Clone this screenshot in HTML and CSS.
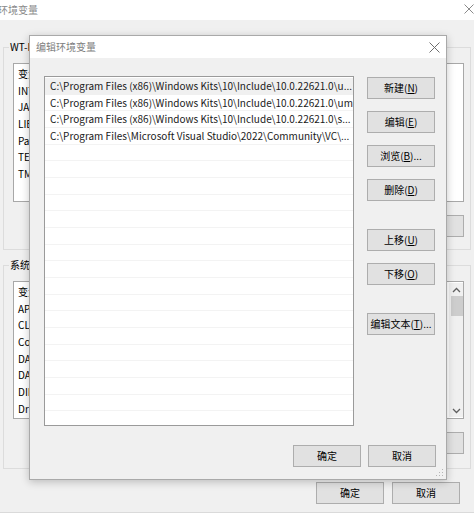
FILE: index.html
```html
<!DOCTYPE html>
<html lang="zh-CN">
<head>
<meta charset="utf-8">
<title>编辑环境变量</title>
<link rel="stylesheet" href="styles.css">
</head>
<body>
<div class="bg-window">
  <div class="bg-title">
    <span class="bg-title-text">环境变量</span>
    <svg class="bg-close" width="10" height="10" viewBox="0 0 10 10"><path d="M0.5 0.5 L9.5 9.5 M9.5 0.5 L0.5 9.5" stroke="#8a8a8a" stroke-width="1" fill="none"/></svg>
  </div>
  <div class="bg-body">
    <fieldset class="group">
      <legend>WT-PC 的用户变量(U)</legend>
      <div class="var-list">
        <div class="var-rows">
          <div class="var-row">变量</div>
          <div class="var-row">INTELLIJ IDEA</div>
          <div class="var-row">JAVA_HOME</div>
          <div class="var-row">LIB</div>
          <div class="var-row">Path</div>
          <div class="var-row">TEMP</div>
          <div class="var-row">TMP</div>
        </div>
      </div>
      <div class="group-buttons">
        <button class="btn">新建(<u>N</u>)...</button>
        <button class="btn">编辑(<u>E</u>)...</button>
        <button class="btn">删除(<u>D</u>)</button>
      </div>
    </fieldset>
    <fieldset class="group group-sys">
      <legend>系统变量(<u>S</u>)</legend>
      <div class="var-list">
        <div class="var-rows">
          <div class="var-row">变量</div>
          <div class="var-row">APPDATA</div>
          <div class="var-row">CLASSPATH</div>
          <div class="var-row">ComSpec</div>
          <div class="var-row">DATA_HOME</div>
          <div class="var-row">DATA_PATH</div>
          <div class="var-row">DIRCMD</div>
          <div class="var-row">DriverData</div>
        </div>
        <div class="scrollbar">
          <svg class="sb-arrow" width="9" height="6" viewBox="0 0 9 6"><path d="M1 5 L4.5 1.5 L8 5" stroke="#606060" stroke-width="1.3" fill="none"/></svg>
          <div class="sb-track"><div class="sb-thumb"></div></div>
          <svg class="sb-arrow" width="9" height="6" viewBox="0 0 9 6"><path d="M1 1 L4.5 4.5 L8 1" stroke="#606060" stroke-width="1.3" fill="none"/></svg>
        </div>
      </div>
      <div class="group-buttons">
        <button class="btn">新建(<u>W</u>)...</button>
        <button class="btn">编辑(<u>I</u>)...</button>
        <button class="btn">删除(<u>L</u>)</button>
      </div>
    </fieldset>
    <div class="bg-footer">
      <button class="btn btn-footer">确定</button>
      <button class="btn btn-footer">取消</button>
    </div>
  </div>
</div>

<div class="dialog">
  <div class="dlg-title">
    <span class="dlg-title-text">编辑环境变量</span>
    <svg class="dlg-close" width="11" height="11" viewBox="0 0 11 11"><path d="M0.5 0.5 L10.5 10.5 M10.5 0.5 L0.5 10.5" stroke="#6e6e6e" stroke-width="1" fill="none"/></svg>
  </div>
  <div class="dlg-body">
    <div class="dlg-main">
      <div class="path-list">
        <div class="path-row selected">C:\Program Files (x86)\Windows Kits\10\Include\10.0.22621.0\u...</div>
        <div class="path-row">C:\Program Files (x86)\Windows Kits\10\Include\10.0.22621.0\um</div>
        <div class="path-row">C:\Program Files (x86)\Windows Kits\10\Include\10.0.22621.0\s...</div>
        <div class="path-row">C:\Program Files\Microsoft Visual Studio\2022\Community\VC\...</div>
      </div>
      <div class="dlg-buttons">
        <button class="btn">新建(<u>N</u>)</button>
        <button class="btn">编辑(<u>E</u>)</button>
        <button class="btn">浏览(<u>B</u>)...</button>
        <button class="btn">删除(<u>D</u>)</button>
        <button class="btn btn-sep">上移(<u>U</u>)</button>
        <button class="btn">下移(<u>O</u>)</button>
        <button class="btn btn-sep">编辑文本(<u>T</u>)...</button>
      </div>
    </div>
    <div class="dlg-footer">
      <button class="btn">确定</button>
      <button class="btn">取消</button>
    </div>
  </div>
  <svg class="grip" width="8" height="8" viewBox="0 0 8 8">
    <rect x="6" y="0" width="1" height="1" fill="#b5b5b5"/>
    <rect x="3" y="3" width="1" height="1" fill="#b5b5b5"/>
    <rect x="6" y="3" width="1" height="1" fill="#b5b5b5"/>
    <rect x="0" y="6" width="1" height="1" fill="#b5b5b5"/>
    <rect x="3" y="6" width="1" height="1" fill="#b5b5b5"/>
    <rect x="6" y="6" width="1" height="1" fill="#b5b5b5"/>
  </svg>
</div>
</body>
</html>
```

FILE: styles.css
```css
* { box-sizing: border-box; }

html, body {
  margin: 0;
  padding: 0;
}

body {
  width: 474px;
  height: 513px;
  overflow: hidden;
  position: relative;
  background: #f0f0f0;
  font-family: "Noto Sans CJK SC", "Noto Sans", sans-serif;
  font-size: 10px;
  color: #000;
}

/* ---------- background window ---------- */
.bg-window {
  width: 480px;
  height: 513px;
  background: #f0f0f0;
  border-bottom: 1px solid #dadada;
}

.bg-title {
  height: 20px;
  background: #fff;
  display: flex;
  align-items: center;
  justify-content: space-between;
  padding: 0 6px 0 0;
  margin-left: -2px;
}

.bg-title-text {
  color: #8a8a8a;
  line-height: 16px;
}

.bg-close { display: block; margin-top: -2px; }

.bg-body {
  padding: 19px 9px 0 3px;
}

.group {
  margin: 0;
  border: 1px solid #dcdcdc;
  padding: 8px 6px 12px 9px;
  min-width: 0;
}

.group legend {
  padding: 0 1px;
  margin-left: -4px;
  line-height: 16px;
  color: #000;
}

.group-sys {
  margin-top: 7px;
  padding-bottom: 14px;
}

.var-list {
  height: 139px;
  background: #fff;
  border: 1px solid #a8a8a8;
  display: flex;
  padding-top: 2px;
}

.group-sys .var-list { height: 138px; }

.var-rows {
  flex: 1;
  padding-left: 4px;
}

.var-row {
  height: 16.67px;
  line-height: 16.67px;
  white-space: nowrap;
}

.scrollbar {
  width: 14px;
  margin-top: -1px;
  margin-bottom: 1px;
  display: flex;
  flex-direction: column;
  align-items: center;
  background: #f0f0f0;
  border-left: 1px solid #f0f0f0;
}

.sb-arrow { display: block; margin: 4px 0 3px; }

.sb-track { flex: 1; width: 100%; }

.sb-thumb {
  width: 12px;
  height: 20px;
  margin: 0 auto;
  background: #cdcdcd;
}

.group-buttons {
  margin-top: 13px;
  display: flex;
  justify-content: flex-end;
  gap: 8px;
}

.btn {
  height: 22px;
  width: 68px;
  padding: 0;
  margin: 0;
  background: #e1e1e1;
  border: 1px solid #adadad;
  font-family: inherit;
  font-size: 10px;
  line-height: 18px;
  color: #000;
  text-align: center;
  white-space: nowrap;
}

.group-buttons .btn { width: 76px; }

.bg-footer {
  margin-top: 13px;
  display: flex;
  justify-content: flex-end;
  gap: 8px;
  padding-right: 11px;
}

.btn-footer { width: 68px; }

/* ---------- dialog ---------- */
.dialog {
  position: absolute;
  left: 29px;
  top: 35px;
  width: 418px;
  height: 445px;
  background: #f0f0f0;
  border: 1px solid #a9a9a9;
  box-shadow: 0 2px 8px rgba(0, 0, 0, 0.22);
  display: flex;
  flex-direction: column;
}

.dlg-title {
  height: 22px;
  background: #fff;
  display: flex;
  align-items: center;
  justify-content: space-between;
  padding: 0 6px 0 6px;
}

.dlg-title-text {
  color: #808080;
  line-height: 16px;
}

.dlg-close { display: block; margin-top: 0; }

.dlg-body {
  flex: 1;
  padding: 18px 10px 0 14px;
  display: flex;
  flex-direction: column;
}

.dlg-main {
  display: flex;
  gap: 13px;
}

.path-list {
  width: 310px;
  height: 350px;
  background-color: #fff;
  border: 1px solid #9a9a9a;
  padding-top: 1px;
  background-image: repeating-linear-gradient(to bottom,
    transparent 0, transparent 15.67px,
    #f3f3f3 15.67px, #f3f3f3 16.67px);
  background-position: 0 1px;
  background-origin: padding-box;
}

.path-row {
  height: 16.67px;
  line-height: 16.67px;
  padding-left: 5px;
  white-space: nowrap;
  overflow: hidden;
  color: #1a1a1a;
}

.path-row.selected { background: #f0f0f0; }

.dlg-buttons {
  display: flex;
  flex-direction: column;
  gap: 12px;
  padding-top: 1px;
}

.dlg-buttons .btn-sep { margin-top: 16px; }

.dlg-footer {
  margin-top: 19px;
  display: flex;
  justify-content: flex-end;
  gap: 7px;
}

.grip {
  position: absolute;
  right: 2px;
  bottom: 2px;
}
```
